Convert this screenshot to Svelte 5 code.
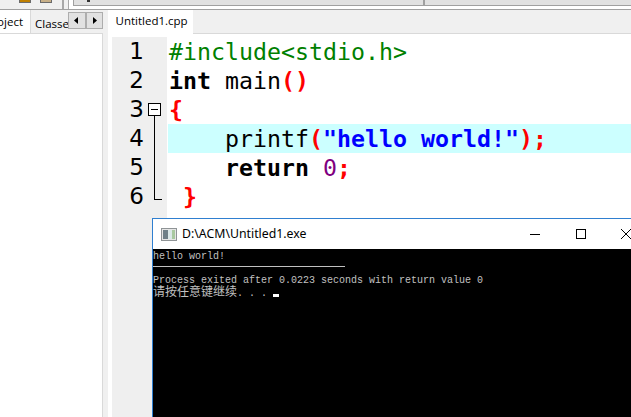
<script>
  const code = [
    [{ t: "#include<stdio.h>", c: "pre" }],
    [{ t: "int", c: "kw" }, { t: " main" }, { t: "()", c: "sym" }],
    [{ t: "{", c: "sym" }],
    [{ t: "    printf" }, { t: "(", c: "sym" }, { t: "\"hello world!\"", c: "str" }, { t: ");", c: "sym" }],
    [{ t: "    " }, { t: "return", c: "kw" }, { t: " " }, { t: "0", c: "num" }, { t: ";", c: "sym" }],
    [{ t: " " }, { t: "}", c: "sym" }]
  ];
  const activeLine = 3;
</script>

<main class="ide">
  <header class="toolbar">
    <div class="tools">
      <span class="tool orange"></span>
      <span class="tool tan"></span>
    </div>
    <div class="grip"></div>
    <div class="toolrow">
      <div class="seg first"><span class="mark"></span></div>
      <div class="seg"></div>
    </div>
  </header>

  <div class="workspace">
    <aside class="side">
      <div class="sidetabs">
        <div class="sidetab active">Project</div>
        <div class="sidetab">Classes</div>
        <button class="scroll"><svg width="5" height="7" viewBox="0 0 5 7"><path d="M4 0v7L0 3.500z" fill="#000" /></svg></button>
        <button class="scroll"><svg width="5" height="7" viewBox="0 0 5 7"><path d="M1 0v7l4-3.500z" fill="#000" /></svg></button>
      </div>
      <div class="sidebody"></div>
    </aside>
    <div class="splitter"></div>

    <section class="editor">
      <div class="tabs">
        <div class="tab">Untitled1.cpp</div>
      </div>
      <div class="gap"></div>
      <div class="body">
        <div class="gutter">
          {#each code as _, i}
            <div class="gutterrow">
              <span class="lineno">{i + 1}</span>
              <span class="fold">
                {#if i === 2}
                  <span class="foldbox"></span><span class="foldline from"></span>
                {:else if i === 5}
                  <span class="foldline end"></span>
                {:else if i > 2}
                  <span class="foldline"></span>
                {/if}
              </span>
            </div>
          {/each}
        </div>
        <div class="code">
          {#each code as line, i}
            <div class="line" class:current={i === activeLine}>{#each line as tok}<span class={tok.c}>{tok.t}</span>{/each}</div>
          {/each}
        </div>
      </div>
    </section>
  </div>

  <div class="console">
    <div class="titlebar">
      <svg class="appicon" width="16" height="13" viewBox="0 0 16 13">
        <rect x="0.500" y="0.500" width="15" height="12" fill="#e6e6e6" stroke="#8f9496" />
        <rect x="2" y="2" width="5" height="9" fill="#6f8088" />
        <rect x="7" y="2" width="4" height="9" fill="#dbe8e8" />
        <rect x="11" y="2" width="3" height="9" fill="#a9c9a0" />
      </svg>
      <span class="title">D:\ACM\Untitled1.exe</span>
      <div class="winbtns">
        <span class="winbtn"><svg width="10" height="10" viewBox="0 0 10 10"><path d="M0 5.500h10" stroke="#000" /></svg></span>
        <span class="winbtn"><svg width="10" height="10" viewBox="0 0 10 10"><rect x="0.500" y="0.500" width="9" height="9" fill="none" stroke="#000" /></svg></span>
        <span class="winbtn"><svg width="10" height="10" viewBox="0 0 10 10"><path d="M0 0l10 10M10 0L0 10" stroke="#000" /></svg></span>
      </div>
    </div>
    <div class="term">
      <div class="termrow">hello world!</div>
      <div class="termrow"><div class="rule"></div></div>
      <div class="termrow">Process exited after 0.0223 seconds with return value 0</div>
      <div class="termrow last"><span class="cjk">请按任意键继续</span>. . . <span class="cursor"></span></div>
    </div>
  </div>
</main>

<style>
  :global(body) {
    margin: 0;
    overflow: hidden;
    background: #fff;
  }

  .ide {
    position: relative;
    width: 631px;
    height: 417px;
    overflow: hidden;
    display: flex;
    flex-direction: column;
    font-family: "Open Sans", "Noto Sans", sans-serif;
  }

  .toolbar {
    height: 9px;
    flex: none;
    display: flex;
    background: #fff;
    border-bottom: 1px solid #a0a0a0;
  }

  .tools {
    width: 62px;
    display: flex;
    align-items: flex-start;
    gap: 9px;
    padding-left: 19px;
    box-sizing: border-box;
    background: #f0f0f0;
  }

  .tool {
    width: 12px;
    height: 3px;
    border: 1px solid #6b6b6b;
    border-top: none;
    box-sizing: border-box;
  }

  .orange { background: #c08000; }
  .tan { background: #c8b088; }

  .grip {
    box-sizing: border-box;
    border-left: 2px solid #a8a8a8;
    border-right: 1px solid #a8a8a8;
    width: 7px;
    background: #f0f0f0;
  }

  .toolrow {
    flex: 1;
    margin-left: 4px;
    height: 6px;
    display: flex;
    background: #e1e1e1;
    border-bottom: 1px solid #a0a0a0;
    box-sizing: border-box;
    border-left: 1px solid #a0a0a0;
  }

  .seg { flex: 1; position: relative; }

  .seg.first {
    flex: 0 0 349px;
    border-right: 2px solid #a0a0a0;
  }

  .mark {
    position: absolute;
    left: 13px;
    top: 0;
    width: 3px;
    height: 2px;
    background: #333;
  }

  .workspace {
    flex: 1;
    display: flex;
    min-height: 0;
  }

  .side {
    width: 103px;
    flex: none;
    display: flex;
    flex-direction: column;
    overflow: hidden;
  }

  .sidetabs {
    height: 23px;
    flex: none;
    display: flex;
    align-items: flex-end;
    background: #f0f0f0;
    border-bottom: 1px solid #d9d9d9;
    box-sizing: content-box;
  }

  .sidetab {
    width: 37px;
    height: 18px;
    flex: none;
    box-sizing: border-box;
    overflow: hidden;
    white-space: nowrap;
    font-size: 11.500px;
    line-height: 18px;
    padding-left: 4px;
    color: #000;
    background: #f0f0f0;
  }

  .sidetab.active {
    width: 31px;
    height: 23px;
    background: #fff;
    border-right: 1px solid #d9d9d9;
    line-height: 23px;
    padding-left: 0;
    text-indent: -14.500px;
  }

  .scroll {
    width: 17.500px;
    height: 17px;
    flex: none;
    align-self: flex-start;
    margin-top: 2px;
    padding: 0;
    display: flex;
    align-items: center;
    justify-content: center;
    background: #e1e1e1;
    border: 1px solid #adadad;
  }

  .sidebody {
    flex: 1;
    background: #fff;
    border-right: 1px solid #d9d9d9;
  }

  .splitter {
    width: 5px;
    flex: none;
    background: #f0f0f0;
  }

  .editor {
    flex: 1;
    min-width: 0;
    display: flex;
    flex-direction: column;
  }

  .tabs {
    height: 23px;
    flex: none;
    display: flex;
    background: #f0f0f0;
    border-bottom: 1px solid #d9d9d9;
  }

  .tab {
    width: 85px;
    height: 24px;
    box-sizing: border-box;
    background: #fff;
    font-size: 11.500px;
    line-height: 22px;
    padding-left: 7.500px;
    color: #000;
    white-space: nowrap;
  }

  .gap {
    height: 3px;
    flex: none;
    background: #fff;
  }

  .body {
    flex: 1;
    display: flex;
    padding-left: 4px;
    min-height: 0;
  }

  .gutter {
    width: 55px;
    flex: none;
    background: #efefef;
  }

  .gutterrow {
    height: 29px;
    display: flex;
    align-items: stretch;
  }

  .lineno {
    width: 32px;
    text-align: right;
    font: 23px/29px "DejaVu Sans", sans-serif;
    color: #000;
    flex: none;
  }

  .fold {
    position: relative;
    flex: 1;
  }

  .foldbox {
    position: absolute;
    left: 4px;
    top: 8px;
    width: 13px;
    height: 13px;
    box-sizing: border-box;
    border: 1px solid #000;
    background: linear-gradient(#000, #000) center / 7px 1px no-repeat #fff;
  }

  .foldline {
    position: absolute;
    left: 10px;
    top: 0;
    bottom: 0;
    width: 1px;
    background: #000;
  }

  .foldline.from { top: 21px; }

  .foldline.end {
    bottom: 11px;
    width: 7px;
    background: none;
    border-left: 1px solid #000;
    border-bottom: 1px solid #000;
  }

  .code {
    flex: 1;
    min-width: 0;
    padding-left: 1px;
    font: 23.250px/29px "DejaVu Sans Mono", monospace;
    color: #000;
  }

  .line {
    height: 29px;
    padding-left: 1px;
    white-space: pre;
  }

  .line.current { background: #ccffff; }

  .pre { color: #008000; }
  .kw { font-weight: 700; }
  .sym { color: #ff0000; font-weight: 700; }
  .str { color: #0000ff; font-weight: 700; }
  .num { color: #800080; }

  .console {
    position: absolute;
    left: 152px;
    top: 218px;
    width: 498px;
    height: 260px;
    box-sizing: border-box;
    border: 1px solid #2f7fd0;
    display: flex;
    flex-direction: column;
    background: #000;
  }

  .titlebar {
    height: 30px;
    flex: none;
    display: flex;
    align-items: center;
    background: #fff;
    padding-left: 8px;
  }

  .appicon { flex: none; }

  .title {
    margin-left: 5px;
    margin-bottom: 1px;
    font: 12.300px "Noto Sans", sans-serif;
    color: #000;
  }

  .winbtns {
    margin-left: auto;
    display: flex;
  }

  .winbtn {
    width: 45.500px;
    height: 30px;
    display: flex;
    align-items: center;
    justify-content: center;
  }

  .term {
    flex: 1;
    background: #000;
    color: #c0c0c0;
    font: 10px/16px "Liberation Mono", monospace;
  }

  .termrow {
    height: 12px;
    position: relative;
    white-space: pre;
  }

  .termrow.last { line-height: 12px; }

  .rule {
    width: 192px;
    height: 1px;
    position: relative;
    top: 5px;
    background: #c0c0c0;
  }

  .cjk {
    font: 12px/12px "Noto Sans CJK SC", sans-serif;
  }

  .cursor {
    display: inline-block;
    width: 6px;
    height: 3px;
    background: #fff;
    vertical-align: -1px;
  }
</style>
